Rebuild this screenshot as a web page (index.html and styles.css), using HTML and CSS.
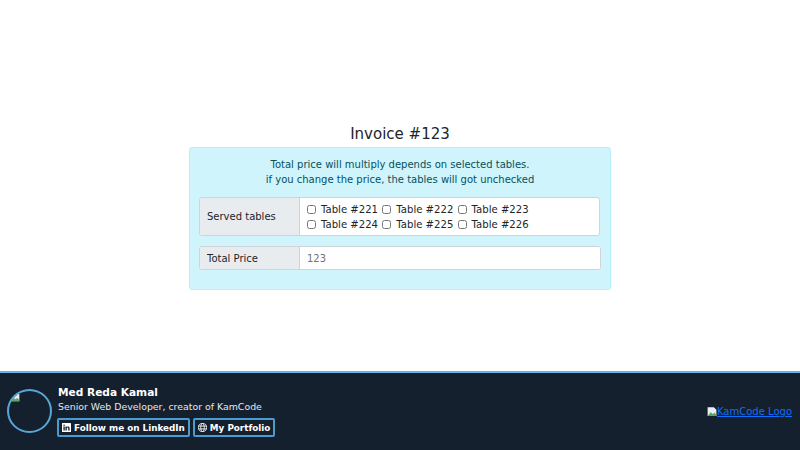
FILE: index.html
```html
<!DOCTYPE html>
<html lang="en">
<head>
    <meta charset="UTF-8">
    <meta name="viewport" content="width=device-width, initial-scale=1.0">
    <title>Invoice #123</title>
    <link rel="stylesheet" href="styles.css">
</head>
<body>
    <main class="page">
        <h1 class="title">Invoice #123</h1>
        <div class="alert">
            <p class="alert-text">Total price will multiply depends on selected tables.<br>if you change the price, the tables will got unchecked</p>
            <div class="input-group served">
                <span class="group-label">Served tables</span>
                <div class="group-body">
                    <div class="tables">
                        <label class="table-check"><input type="checkbox">Table #221</label>
                        <label class="table-check"><input type="checkbox">Table #222</label>
                        <label class="table-check"><input type="checkbox">Table #223</label>
                        <label class="table-check"><input type="checkbox">Table #224</label>
                        <label class="table-check"><input type="checkbox">Table #225</label>
                        <label class="table-check"><input type="checkbox">Table #226</label>
                    </div>
                </div>
            </div>
            <div class="input-group">
                <span class="group-label">Total Price</span>
                <input class="group-input" type="text" placeholder="123">
            </div>
        </div>
    </main>
    <footer class="footer">
        <div class="author">
            <div class="avatar">
                <svg class="broken-icon" viewBox="0 0 16 16" width="11" height="11">
                    <path d="M1 1h10l4 4v10H1z" fill="#e8eef5"/>
                    <path d="M1 15l5-6 3 3 3-2 3 3v2z" fill="#5da35a"/>
                </svg>
            </div>
            <div class="author-info">
                <div class="author-name">Med Reda Kamal</div>
                <div class="author-role">Senior Web Developer, creator of KamCode</div>
                <div class="author-links">
                    <a class="btn-link" href="#">
                        <svg viewBox="0 0 16 16" width="9" height="9" fill="currentColor"><path d="M0 1.100C0 .5.5 0 1.200 0h13.600c.7 0 1.200.5 1.200 1.100v13.800c0 .6-.5 1.100-1.200 1.100H1.200C.5 16 0 15.500 0 14.900zm4.900 12.400V6.200H2.500v7.300zM3.700 5.200c.8 0 1.400-.6 1.400-1.300S4.500 2.600 3.700 2.600s-1.400.6-1.400 1.300.6 1.300 1.400 1.300zm9.800 8.300V9.300c0-2.200-1.200-3.300-2.800-3.300-1.300 0-1.900.7-2.200 1.200V6.200H6.100v7.300h2.400V9.400c0-.2 0-.4.100-.6.200-.4.600-.9 1.200-.9.900 0 1.200.7 1.200 1.600v4z"/></svg>
                        Follow me on LinkedIn
                    </a>
                    <a class="btn-link" href="#">
                        <svg viewBox="0 0 16 16" width="9" height="9" fill="none" stroke="currentColor" stroke-width="1.500"><circle cx="8" cy="8" r="7.200"/><ellipse cx="8" cy="8" rx="3.200" ry="7.200"/><path d="M1 5.500h14M1 10.500h14"/></svg>
                        My Portfolio
                    </a>
                </div>
            </div>
        </div>
        <a class="logo-link" href="#"><svg class="broken-icon" viewBox="0 0 16 16" width="10" height="11">
                <path d="M1 1h10l4 4v10H1z" fill="#e8eef5"/>
                <path d="M1 15l5-6 3 3 3-2 3 3v2z" fill="#5da35a"/>
            </svg>KamCode Logo</a>
    </footer>
</body>
</html>
```
FILE: styles.css
```css
* {
    box-sizing: border-box;
}
body {
    font-family: "DejaVu Sans", sans-serif;
    font-size: 10px;
    color: #212529;
    background-color: #fff;
    margin: 0;
    height: 100vh;
    display: flex;
    flex-direction: column;
}
.page {
    flex: 1;
    padding-bottom: 81px;
    display: flex;
    flex-direction: column;
    align-items: center;
    justify-content: flex-end;
}
.title {
    font-size: 15px;
    font-weight: 400;
    line-height: 19px;
    margin: 0 0 3px;
}
.alert {
    width: 422px;
    padding: 9px;
    background-color: #cff4fc;
    border: 1px solid #b6effb;
    border-radius: 3px;
}
.alert-text {
    color: #055160;
    line-height: 15px;
    text-align: center;
    margin: 0 0 10px;
}
.input-group {
    display: flex;
    margin-bottom: 10px;
    border: 1px solid #ced4da;
    border-radius: 3px;
    overflow: hidden;
    background-color: #fff;
}
.served {
    margin-right: 1px;
}
.group-label {
    width: 100px;
    padding: 3px 7px;
    background-color: #e9ecef;
    border-right: 1px solid #ced4da;
    line-height: 15px;
    display: flex;
    align-items: center;
}
.group-body {
    flex: 1;
    padding: 3.5px 7px;
}
.tables {
    display: grid;
    grid-template-columns: repeat(3, 75.3px);
    line-height: 15px;
}
.table-check {
    display: flex;
    align-items: center;
    gap: 5px;
    font-size: 10.100px;
    white-space: nowrap;
}
.table-check input {
    margin: 0;
    width: 9px;
    height: 9px;
}
.group-input {
    flex: 1;
    min-width: 0;
    border: 0;
    padding: 3.500px 7px;
    font: inherit;
    line-height: 15px;
    color: #212529;
}
.group-input::placeholder {
    color: #6c757d;
}
.footer {
    height: 79px;
    padding: 0 8px 0 7px;
    background-color: #15202f;
    border-top: 2px solid #63b3ed;
    display: flex;
    align-items: center;
    justify-content: space-between;
}
.author {
    display: flex;
    align-items: center;
    gap: 6px;
}
.avatar {
    width: 45px;
    height: 44px;
    margin-bottom: 2px;
    border: 2px solid #58a6d6;
    border-radius: 50%;
    overflow: hidden;
}
.broken-icon {
    display: block;
}
.author-name {
    color: #fff;
    font-size: 10.600px;
    font-weight: 700;
    line-height: 13px;
}
.author-role {
    color: #e2e8f0;
    font-size: 9.400px;
    line-height: 14px;
    margin-top: 1px;
}
.author-links {
    display: flex;
    gap: 3px;
    margin: 4px 0 0 -1px;
}
.btn-link {
    display: flex;
    align-items: center;
    gap: 3px;
    height: 19.500px;
    padding: 0 3px;
    color: #fff;
    font-size: 8.800px;
    font-weight: 700;
    text-decoration: none;
    border: 2px solid #4a9cd0;
    border-radius: 2px;
}
.logo-link {
    display: flex;
    align-items: center;
    color: #0d6efd;
    font-size: 10px;
    text-decoration: underline;
}
```
